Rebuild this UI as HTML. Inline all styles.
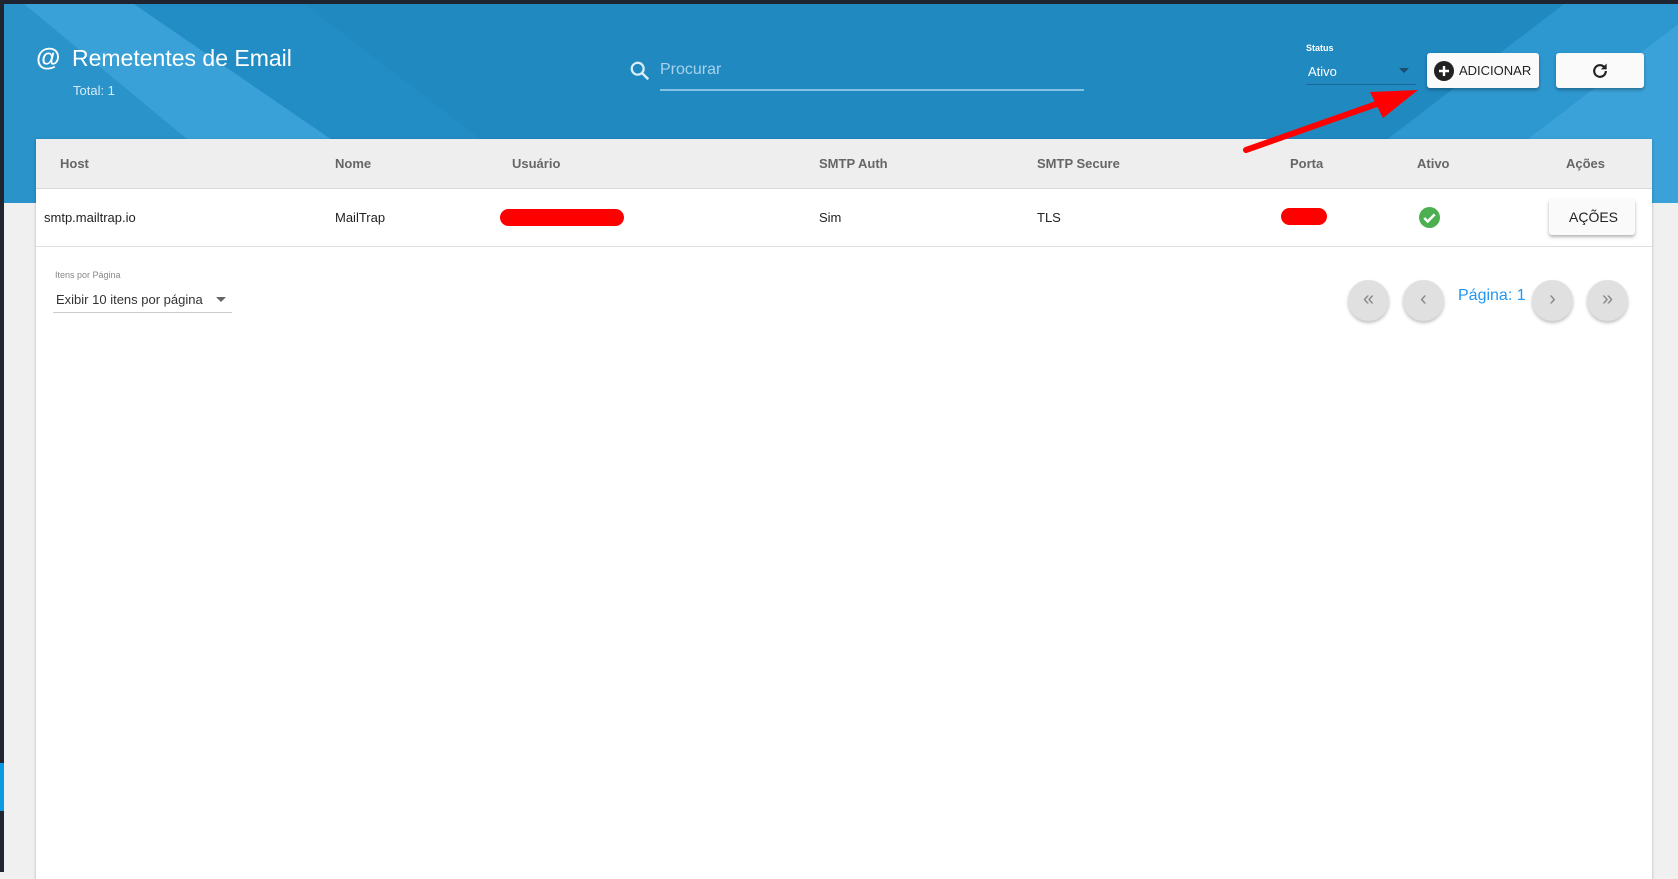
<!DOCTYPE html>
<html><head><meta charset="utf-8"><style>
*{margin:0;padding:0;box-sizing:border-box}
body{width:1678px;height:872px;overflow:hidden;background:#f0f0f0;font-family:"Liberation Sans",sans-serif;position:relative}
.abs{position:absolute}
.t{position:absolute;white-space:nowrap}
#card{left:36px;top:139px;width:1616px;height:740px;background:#fff;box-shadow:0 1px 3px rgba(0,0,0,.25)}
.th{position:absolute;top:17px;font-size:13px;font-weight:bold;color:#666}
.td{position:absolute;top:71px;font-size:13px;color:#222}
.btn{position:absolute;background:#fafafa;border-radius:3px;box-shadow:0 2px 3px rgba(0,0,0,.3)}
.pg{position:absolute;top:280px;width:41px;height:41px;border-radius:50%;background:#e0e0e0;box-shadow:0 2px 3px rgba(0,0,0,.25);color:#888;font-size:20px;text-align:center;line-height:39px}
</style></head><body>
<div class="abs" style="left:0;top:0;width:1678px;height:4px;background:#1f2530"></div>
<div class="abs" style="left:0;top:0;width:4px;height:872px;background:#20252f"></div>
<div class="abs" style="left:0;top:763px;width:4px;height:48px;background:#0a9be4"></div>
<svg class="abs" style="left:4px;top:4px" width="1674" height="199">
<rect width="1674" height="199" fill="#2089c0"/>
<polygon points="0,0 20,0 260,199 0,199" fill="#2a93c9"/>
<polygon points="20,0 130,0 420,199 260,199" fill="#39a1d7"/>
<polygon points="130,0 300,0 560,199 420,199" fill="#2590c8" opacity=".6"/>
<polygon points="1440,199 1674,20 1674,199" fill="#3aa2d8"/>
<polygon points="1300,199 1560,0 1674,0 1674,20 1440,199" fill="#2d97cf"/>
</svg>
<div class="t" style="left:36px;top:44px;font-size:25px;color:#fff;font-weight:bold">@</div>
<div class="t" style="left:72px;top:45px;font-size:23px;color:#fff">Remetentes de Email</div>
<div class="t" style="left:73px;top:83px;font-size:13px;color:#d8eaf5">Total: 1</div>
<svg class="abs" style="left:629px;top:60px" width="22" height="22" viewBox="0 0 24 24"><circle cx="9.5" cy="9.5" r="6.5" stroke="#dbeef9" stroke-width="2.4" fill="none"/><path d="M14 14l7 7" stroke="#dbeef9" stroke-width="2.6"/></svg>
<div class="t" style="left:660px;top:61px;font-size:16px;color:#a9d2ec">Procurar</div>
<div class="abs" style="left:660px;top:89px;width:424px;height:2px;background:#86c2e6"></div>
<div class="t" style="left:1306px;top:43px;font-size:9px;color:#fff;font-weight:bold">Status</div>
<div class="t" style="left:1308px;top:64px;font-size:13px;color:#fff">Ativo</div>
<div class="abs" style="left:1399px;top:68px;border:5px solid transparent;border-top:5px solid #1a4d6e;border-bottom:0"></div>
<div class="abs" style="left:1306px;top:84px;width:110px;height:1px;background:#1a6a99"></div>
<div class="btn" style="left:1427px;top:53px;width:112px;height:35px"></div>
<svg class="abs" style="left:1434px;top:61px" width="20" height="20" viewBox="0 0 20 20"><circle cx="10" cy="10" r="10" fill="#222"/><path d="M10 5v10M5 10h10" stroke="#fff" stroke-width="2.4"/></svg>
<div class="t" style="left:1459px;top:63px;font-size:13px;color:#222">ADICIONAR</div>
<div class="btn" style="left:1556px;top:53px;width:88px;height:35px"></div>
<svg class="abs" style="left:1590px;top:61px" width="20" height="20" viewBox="0 0 24 24"><path d="M19 12a7 7 0 1 1-2.1-5" stroke="#222" stroke-width="2.6" fill="none"/><path d="M20 3v7h-7z" fill="#222"/></svg>
<div id="card" class="abs">
<div class="abs" style="left:0;top:0;width:1616px;height:50px;background:#eee;border-bottom:1px solid #d8d8d8"></div>
<div class="th" style="left:24px">Host</div><div class="th" style="left:299px">Nome</div><div class="th" style="left:476px">Usuário</div><div class="th" style="left:783px">SMTP Auth</div><div class="th" style="left:1001px">SMTP Secure</div><div class="th" style="left:1254px">Porta</div><div class="th" style="left:1381px">Ativo</div><div class="th" style="left:1530px">Ações</div>
<div class="td" style="left:8px">smtp.mailtrap.io</div><div class="td" style="left:299px">MailTrap</div>
<div class="abs" style="left:464px;top:70px;width:124px;height:17px;border-radius:9px;background:#f00"></div>
<div class="td" style="left:783px">Sim</div><div class="td" style="left:1001px">TLS</div>
<div class="abs" style="left:1245px;top:69px;width:46px;height:17px;border-radius:9px;background:#f00"></div>
<svg class="abs" style="left:1383px;top:68px" width="21" height="21" viewBox="0 0 20 20"><circle cx="10" cy="10" r="10" fill="#4caf50"/><path d="M5 10.5l3.3 3.3L15 7" stroke="#fff" stroke-width="2.4" fill="none"/></svg>
<div class="abs" style="left:0;top:107px;width:1616px;height:1px;background:#e0e0e0"></div>
<div class="btn" style="left:1513px;top:60px;width:86px;height:36px"></div>
<div class="t" style="left:1533px;top:70px;font-size:14px;color:#222">AÇÕES</div>
<div class="t" style="left:19px;top:131px;font-size:9px;color:#888">Itens por Página</div>
<div class="t" style="left:20px;top:153px;font-size:13px;color:#333">Exibir 10 itens por página</div>
<div class="abs" style="left:180px;top:158px;border:5px solid transparent;border-top:5px solid #666;border-bottom:0"></div>
<div class="abs" style="left:17px;top:173px;width:179px;height:1px;background:#ccc"></div>
</div>
<div class="pg" style="left:1348px">«</div>
<div class="pg" style="left:1403px">‹</div>
<div class="t" style="left:1458px;top:287px;font-size:16px;color:#2196f3">Página: 1</div>
<div class="pg" style="left:1532px">›</div>
<div class="pg" style="left:1587px">»</div>
<svg class="abs" style="left:0;top:0" width="1678" height="872"><path d="M1246 150L1385 101" stroke="#f00" stroke-width="6" stroke-linecap="round"/><path d="M1418 90L1370 92L1383 118Z" fill="#f00"/></svg>
</body></html>
